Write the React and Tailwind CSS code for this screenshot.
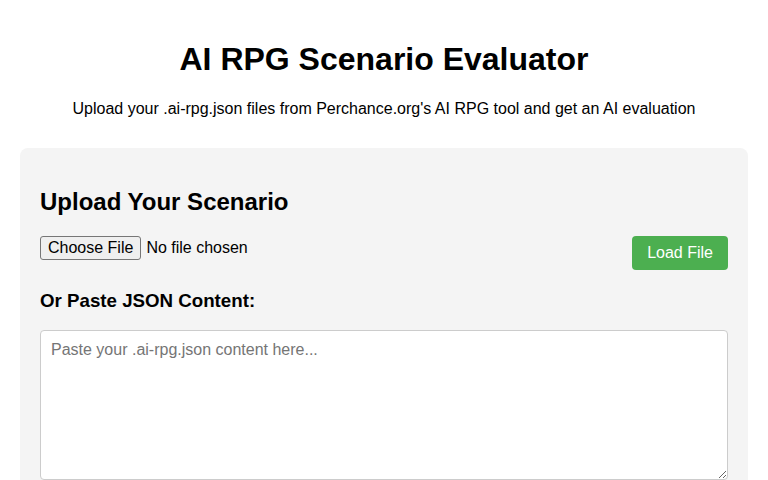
export default function App() {
  return (
    <div className="min-h-screen bg-white p-5 text-black font-['Liberation_Sans',Arial,sans-serif]">
      <div className="mx-auto max-w-[800px]">
        <header className="mb-[30px] text-center">
          <h1 className="my-[21.44px] text-[32px] leading-[37px] font-bold">AI RPG Scenario Evaluator</h1>
          <p className="text-base leading-[18.4px]">
            Upload your .ai-rpg.json files from Perchance.org's AI RPG tool and get an AI evaluation
          </p>
        </header>

        <section className="rounded-lg bg-[#f4f4f4] p-5">
          <h2 className="mt-[19.92px] mb-[19.92px] text-2xl leading-[27.6px] font-bold">Upload Your Scenario</h2>

          <div className="flex items-start justify-between">
            <input
              type="file"
              accept=".json"
              className="text-base leading-[18.4px] file:mr-[5px] file:rounded-[3px] file:border file:border-[#767676] file:bg-[#efefef] file:px-[7px] file:py-[2px] file:text-black"
            />
            <button className="rounded bg-[#4caf50] px-[15px] py-2 text-base leading-[18.4px] text-white">
              Load File
            </button>
          </div>

          <h3 className="mt-[19.5px] mb-[19px] text-[18.72px] leading-[21.5px] font-bold">Or Paste JSON Content:</h3>

          <textarea
            className="block h-[150px] w-full rounded border border-[#ccc] bg-white p-[10px] text-base leading-[18.4px] placeholder:text-[#757575]"
            placeholder="Paste your .ai-rpg.json content here..."
          />
        </section>
      </div>
    </div>
  );
}
